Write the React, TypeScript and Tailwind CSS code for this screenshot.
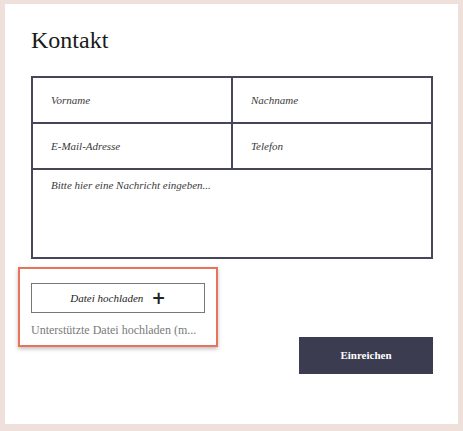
const serif = { fontFamily: '"Liberation Serif", "DejaVu Serif", serif' };

function Field({ label, className = "" }: { label: string; className?: string }) {
  return (
    <div className={`flex h-[44px] items-center pl-[18px] text-[11px] italic text-[#3a3a3a] ${className}`}>
      {label}
    </div>
  );
}

export default function App() {
  return (
    <div className="h-[431px] w-[463px] bg-[#f0e0dc] pl-[5px] pr-[5px] pt-[4px]" style={serif}>
      <div className="h-[420px] w-[453px] bg-white pl-[26px] pt-[21px]">
        <h1 className="text-[24px] leading-[30px] text-[#1a1a1a]">Kontakt</h1>

        <div className="mt-[21px] w-[402px] border-2 border-[#45465a]">
          <div className="grid grid-cols-[200px_1fr] border-b-2 border-[#45465a]">
            <Field label="Vorname" className="border-r-2 border-[#45465a]" />
            <Field label="Nachname" />
          </div>
          <div className="grid grid-cols-[200px_1fr] border-b-2 border-[#45465a]">
            <Field label="E-Mail-Adresse" className="border-r-2 border-[#45465a]" />
            <Field label="Telefon" />
          </div>
          <div className="h-[87px] pl-[18px] pt-[7px] text-[11px] italic text-[#3a3a3a]">
            Bitte hier eine Nachricht eingeben...
          </div>
        </div>

        <div className="mt-[8px] flex items-start justify-between pr-[25px]">
          <div className="-ml-[13px] w-[200px] border-2 border-[#e8725a] px-[11px] pb-[6px] pt-[14px] shadow-[0_2px_4px_rgba(0,0,0,0.25)]">
            <button className="flex h-[30px] w-[174px] items-center justify-center gap-[8px] border border-[#777] bg-white text-[11px] italic text-[#222]">
              <span>Datei hochladen</span>
              <span className="text-[17px] font-bold not-italic leading-none" style={{ fontFamily: '"DejaVu Sans", sans-serif' }}>+</span>
            </button>
            <div className="mt-[8px] whitespace-nowrap text-[12px] text-[#7a7a7a]">
              Unterstützte Datei hochladen (m...
            </div>
          </div>
          <button className="mt-[70px] h-[37px] w-[134px] bg-[#3b3c50] text-[11px] font-bold text-white">
            Einreichen
          </button>
        </div>
      </div>
    </div>
  );
}
